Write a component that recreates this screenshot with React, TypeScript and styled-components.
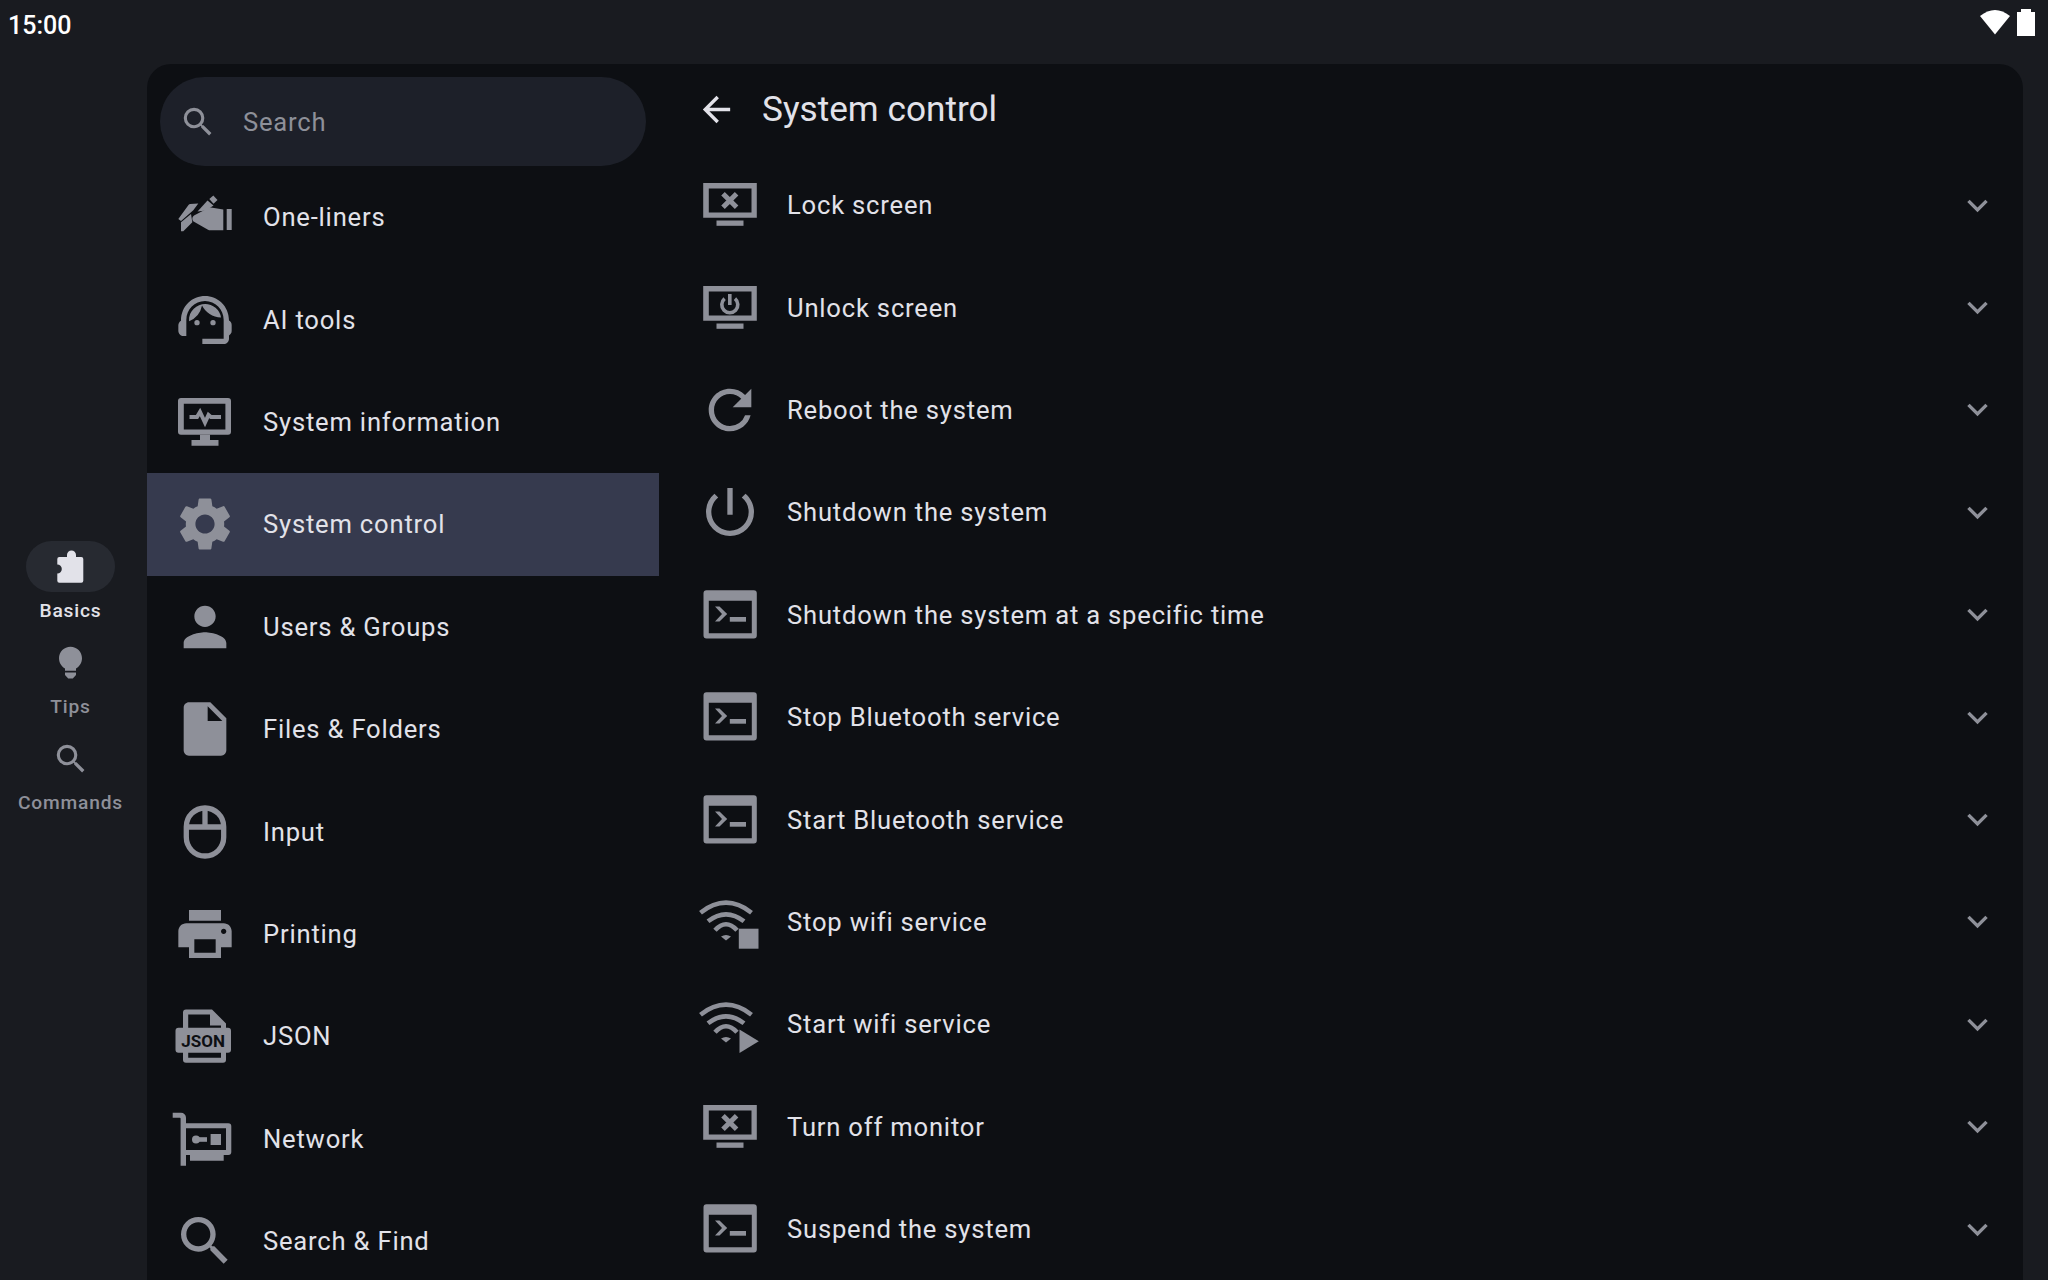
import React from "react";
import styled, { createGlobalStyle } from "styled-components";
import {
  MdArrowBack,
  MdInsertDriveFile,
  MdKeyboardArrowDown,
  MdPerson,
  MdPowerSettingsNew,
  MdPrint,
  MdRefresh,
  MdSearch,
  MdSettings,
  MdSupportAgent,
} from "react-icons/md";

const GlobalStyle = createGlobalStyle`
  html, body {
    margin: 0;
    padding: 0;
    background: #191b20;
  }
  * {
    box-sizing: border-box;
  }
`;

const Screen = styled.div`
  width: 2048px;
  height: 1280px;
  overflow: hidden;
  background: #191b20;
  font-family: Roboto, "Liberation Sans", sans-serif;
  color: #e2e2e9;
  display: flex;
  flex-direction: column;
`;

const StatusBar = styled.div`
  height: 64px;
  flex: none;
  padding: 0 13px 14px 8px;
  display: flex;
  align-items: center;
  justify-content: space-between;
  color: #fff;
`;

const Clock = styled.span`
  font-size: 25px;
  font-weight: 500;
`;

const StatusIcons = styled.div`
  display: flex;
  align-items: center;
  gap: 7px;
  margin-top: -6px;
`;

const Body = styled.div`
  flex: 1;
  min-height: 0;
  display: flex;
`;

const Rail = styled.nav`
  width: 147px;
  flex: none;
  padding: 26px 6px 0 0;
  display: flex;
  flex-direction: column;
  align-items: center;
  justify-content: center;
`;

const RailItem = styled.div<{ $active?: boolean }>`
  height: 96px;
  width: 100%;
  display: flex;
  flex-direction: column;
  align-items: center;
  color: ${(p) => (p.$active ? "#e2e2e9" : "#8e9099")};
`;

const RailIcon = styled.div<{ $active?: boolean }>`
  width: 89px;
  height: 51px;
  border-radius: 26px;
  display: flex;
  align-items: center;
  justify-content: center;
  background: ${(p) => (p.$active ? "#272a31" : "transparent")};
`;

const RailLabel = styled.span<{ $active?: boolean }>`
  margin-top: 5px;
  font-size: 19.2px;
  line-height: 27px;
  font-weight: 500;
  letter-spacing: 0.8px;
  color: ${(p) => (p.$active ? "#e2e2e9" : "#8e9099")};
`;

const Panel = styled.main`
  flex: 1;
  min-width: 0;
  margin-right: 25px;
  border-radius: 24px 24px 0 0;
  background: #0d0f13;
  overflow: hidden;
  display: flex;
`;

const Sidebar = styled.aside`
  width: 512px;
  flex: none;
`;

const SearchWrap = styled.div`
  height: 102px;
  padding: 13px 13px 0;
`;

const SearchPill = styled.div`
  height: 89px;
  border-radius: 45px;
  background: #1d2029;
  padding-left: 19px;
  display: flex;
  align-items: center;
  gap: 26px;
  color: #8e9099;
`;

const SearchText = styled.span`
  font-size: 25.6px;
  letter-spacing: 0.8px;
  color: #8e9099;
`;

const SideRow = styled.div<{ $selected?: boolean }>`
  height: 102.4px;
  padding-left: 26px;
  display: flex;
  align-items: center;
  gap: 26px;
  background: ${(p) => (p.$selected ? "#363a4e" : "transparent")};
  color: #8e9099;
`;

const RowText = styled.span`
  font-size: 25.6px;
  letter-spacing: 0.8px;
  color: #e2e2e9;
  white-space: nowrap;
`;

const Content = styled.section`
  flex: 1;
  min-width: 0;
`;

const Header = styled.header`
  height: 90px;
  padding: 0 0 0 37px;
  display: flex;
  align-items: center;
  gap: 25px;
  color: #e2e2e9;
`;

const Title = styled.h1`
  margin: 0;
  font-size: 35.2px;
  font-weight: 400;
`;

const ListRow = styled.div`
  height: 102.4px;
  padding: 0 25px 0 38.5px;
  display: flex;
  align-items: center;
  gap: 25.5px;
  color: #8e9099;
`;

const Grow = styled.div`
  flex: 1;
  min-width: 0;
`;

const Glyph = styled.svg.attrs({ viewBox: "0 0 64 64", fill: "currentColor" })`
  width: 64px;
  height: 64px;
  flex: none;
  overflow: visible;
`;

const SmallGlyph = styled.svg.attrs({ viewBox: "0 0 41 41", fill: "currentColor" })`
  width: 41px;
  height: 41px;
`;

const JsonLabel = styled.text`
  font-family: "Roboto", "Liberation Sans", sans-serif;
  font-size: 17px;
  font-weight: 700;
  fill: #0d0f13;
`;

const Monitor = ({ children }: { children?: React.ReactNode }) => (
  <Glyph>
    <path fillRule="evenodd" d="M5.2 10.1H58.8V44.8H5.2ZM10.8 15.5V39.5H53.5V15.5Z" />
    <rect x="18.5" y="47.5" width="27" height="5.3" />
    {children}
  </Glyph>
);

const LockMonitor = () => (
  <Monitor>
    <path d="M25 20.7L31.8 27.5M38.6 20.7L31.8 27.5M25 34.3L31.8 27.5M38.6 34.3L31.8 27.5" stroke="currentColor" strokeWidth="5" fill="none" />
  </Monitor>
);

const PowerMonitor = () => (
  <Monitor>
    <path d="M26.6 22.6A8 8 0 1 0 37 22.6" stroke="currentColor" strokeWidth="3.6" fill="none" />
    <rect x="30" y="18" width="3.6" height="11" />
  </Monitor>
);

const PulseMonitor = () => (
  <Glyph>
    <path
      fillRule="evenodd"
      d="M8 7.9H55a3 3 0 0 1 3 3V41.8a3 3 0 0 1-3 3H8a3 3 0 0 1-3-3V10.9a3 3 0 0 1 3-3ZM10.8 13.8V39.6H52.4V13.8Z"
    />
    <path d="M27 44.8H37V50H45.5V55.8H18.5V50H27Z" />
    <path d="M16.5 27H24L27 22L32 32.5L35.5 25L38 27H48" stroke="currentColor" strokeWidth="4" fill="none" />
  </Glyph>
);

const MouseIcon = () => (
  <Glyph>
    <rect x="13.3" y="8" width="37.4" height="48" rx="18.7" stroke="currentColor" strokeWidth="5.3" fill="none" />
    <path d="M13.3 27H50.7M32 8V27" stroke="currentColor" strokeWidth="5.3" fill="none" />
  </Glyph>
);

const TerminalIcon = () => (
  <Glyph>
    <path
      fillRule="evenodd"
      d="M8.5 7.2H55.8a3 3 0 0 1 3 3V52.5a3 3 0 0 1-3 3H8.5a3 3 0 0 1-3-3V10.2a3 3 0 0 1 3-3ZM10.8 17.8V50.2H53.8V17.8Z"
    />
    <path d="M17 23.5H21.5L29.2 31L21.5 38.5H17L24 31Z" />
    <rect x="31.8" y="34" width="16.2" height="4.7" />
  </Glyph>
);

const WifiArcs = () => (
  <>
    <path d="M2.5 22.7Q28 2.7 53.5 22.7M10 31.3Q28 17.3 46 31.3M17 40.3Q28 28.3 39 40.3" stroke="currentColor" strokeWidth="4.6" fill="none" />
    <path d="M23 46.5Q28 43.5 33 46.5L28 50.5Z" />
  </>
);

const WifiStop = () => (
  <Glyph>
    <WifiArcs />
    <rect x="40.8" y="38.7" width="19.7" height="20" />
  </Glyph>
);

const WifiStart = () => (
  <Glyph>
    <WifiArcs />
    <path d="M41.5 37.6L60.8 49.3L41.5 61Z" />
  </Glyph>
);

const SignIcon = () => (
  <Glyph>
    <rect x="53.7" y="24" width="5" height="21" />
    <path d="M21 30.5L35.3 22.9Q36.5 22.3 38 22.6L50.3 24.6V45.3H37.5Q36 45.3 35 44.7L21 36.8C18.8 35.3 18.8 32 21 30.5Z" />
    <path d="M24.5 26.5L34.5 15.5L40.5 20.5L33 25.5Z" />
    <path d="M36.3 14L40.3 10.5L44.5 15L40.5 18.8Z" />
    <path d="M5.3 33.9L15.3 20.2Q15.8 19.2 17 19L25.3 18.6L20.3 25.3L8 35.9Z" />
    <path d="M8 37.3L18 28.9L19.3 37.3L10.3 46.3H8Z" />
  </Glyph>
);

const JsonIcon = () => (
  <Glyph>
    <path
      fillRule="evenodd"
      d="M13 5.4H39L53 19.5V23.7H55a3 3 0 0 1 3 3V45.7a3 3 0 0 1-3 3H53V55.7a3 3 0 0 1-3 3H13a3 3 0 0 1-3-3V48.7H5.5a3 3 0 0 1-3-3V26.7a3 3 0 0 1 3-3H10V8.4a3 3 0 0 1 3-3ZM15.2 10.4V23.7H48V21.5H37V10.4ZM15.2 48.7V53.7H48V48.7Z"
    />
    <JsonLabel x="30.2" y="42.7" textAnchor="middle">JSON</JsonLabel>
  </Glyph>
);

const CardIcon = () => (
  <Glyph>
    <path d="M-.3 5.7H8a5 5 0 0 1 5 5V58.7H7.6V11.5Q7.6 10.7 6.8 10.7H-.3Z" />
    <path
      fillRule="evenodd"
      d="M13 16.3H55.3a3 3 0 0 1 3 3V45a3 3 0 0 1-3 3H50.7V53.7H17V48H13V43H53V21.3H13Z"
    />
    <rect x="37.6" y="27" width="10.4" height="11" />
    <rect x="22" y="30.2" width="12" height="4.6" />
    <circle cx="23" cy="32.5" r="4" />
  </Glyph>
);

const PuzzleIcon = () => (
  <SmallGlyph>
    <path d="M9.3 11H17V9a4.5 4.5 0 0 1 9 0V11H31.3a2 2 0 0 1 2 2V34.7a2 2 0 0 1-2 2H9.3a2 2 0 0 1-2-2V27.5a4.5 4.5 0 0 0 0-9V13a2 2 0 0 1 2-2Z" />
  </SmallGlyph>
);

const BulbIcon = () => (
  <SmallGlyph>
    <path d="M20.5 4.7C26.9 4.7 32 9.8 32 16.2C32 20.6 29.5 24.5 26 26.5L26 28.8H15V26.5C11.5 24.5 9 20.6 9 16.2C9 9.8 14.1 4.7 20.5 4.7Z" />
    <path d="M15 30.6H26V33L22.8 36.6H18.2L15 33Z" />
  </SmallGlyph>
);

const WifiStatus = () => (
  <svg width="30" height="26" viewBox="0 0 30 26" fill="#fff">
    <path d="M0 7Q15 -5 30 7L15 25.5Z" />
  </svg>
);

const BatteryStatus = () => (
  <svg width="18" height="27" viewBox="0 0 18 27" fill="#fff">
    <path d="M4 0H14V3H18V27H0V3H4Z" />
  </svg>
);

const sideItems: { label: string; icon: React.ReactNode; selected?: boolean }[] = [
  { label: "One-liners", icon: <SignIcon /> },
  { label: "AI tools", icon: <MdSupportAgent size={64} /> },
  { label: "System information", icon: <PulseMonitor /> },
  { label: "System control", icon: <MdSettings size={64} />, selected: true },
  { label: "Users & Groups", icon: <MdPerson size={64} /> },
  { label: "Files & Folders", icon: <MdInsertDriveFile size={64} /> },
  { label: "Input", icon: <MouseIcon /> },
  { label: "Printing", icon: <MdPrint size={64} /> },
  { label: "JSON", icon: <JsonIcon /> },
  { label: "Network", icon: <CardIcon /> },
  { label: "Search & Find", icon: <MdSearch size={64} /> },
];

const commands: { label: string; icon: React.ReactNode }[] = [
  { label: "Lock screen", icon: <LockMonitor /> },
  { label: "Unlock screen", icon: <PowerMonitor /> },
  { label: "Reboot the system", icon: <MdRefresh size={64} /> },
  { label: "Shutdown the system", icon: <MdPowerSettingsNew size={64} /> },
  { label: "Shutdown the system at a specific time", icon: <TerminalIcon /> },
  { label: "Stop Bluetooth service", icon: <TerminalIcon /> },
  { label: "Start Bluetooth service", icon: <TerminalIcon /> },
  { label: "Stop wifi service", icon: <WifiStop /> },
  { label: "Start wifi service", icon: <WifiStart /> },
  { label: "Turn off monitor", icon: <LockMonitor /> },
  { label: "Suspend the system", icon: <TerminalIcon /> },
];

const App = () => {
  return (
    <Screen>
      <GlobalStyle />
      <StatusBar>
        <Clock>15:00</Clock>
        <StatusIcons>
          <WifiStatus />
          <BatteryStatus />
        </StatusIcons>
      </StatusBar>
      <Body>
        <Rail>
          <RailItem $active>
            <RailIcon $active>
              <PuzzleIcon />
            </RailIcon>
            <RailLabel $active>Basics</RailLabel>
          </RailItem>
          <RailItem>
            <RailIcon>
              <BulbIcon />
            </RailIcon>
            <RailLabel>Tips</RailLabel>
          </RailItem>
          <RailItem>
            <RailIcon>
              <MdSearch size={38} />
            </RailIcon>
            <RailLabel>Commands</RailLabel>
          </RailItem>
        </Rail>
        <Panel>
          <Sidebar>
            <SearchWrap>
              <SearchPill>
                <MdSearch size={38} />
                <SearchText>Search</SearchText>
              </SearchPill>
            </SearchWrap>
            {sideItems.map((item) => (
              <SideRow key={item.label} $selected={item.selected}>
                {item.icon}
                <RowText>{item.label}</RowText>
              </SideRow>
            ))}
          </Sidebar>
          <Content>
            <Header>
              <MdArrowBack size={41} />
              <Title>System control</Title>
            </Header>
            {commands.map((item) => (
              <ListRow key={item.label}>
                {item.icon}
                <RowText>{item.label}</RowText>
                <Grow />
                <MdKeyboardArrowDown size={41} />
              </ListRow>
            ))}
          </Content>
        </Panel>
      </Body>
    </Screen>
  );
};

export default App;
